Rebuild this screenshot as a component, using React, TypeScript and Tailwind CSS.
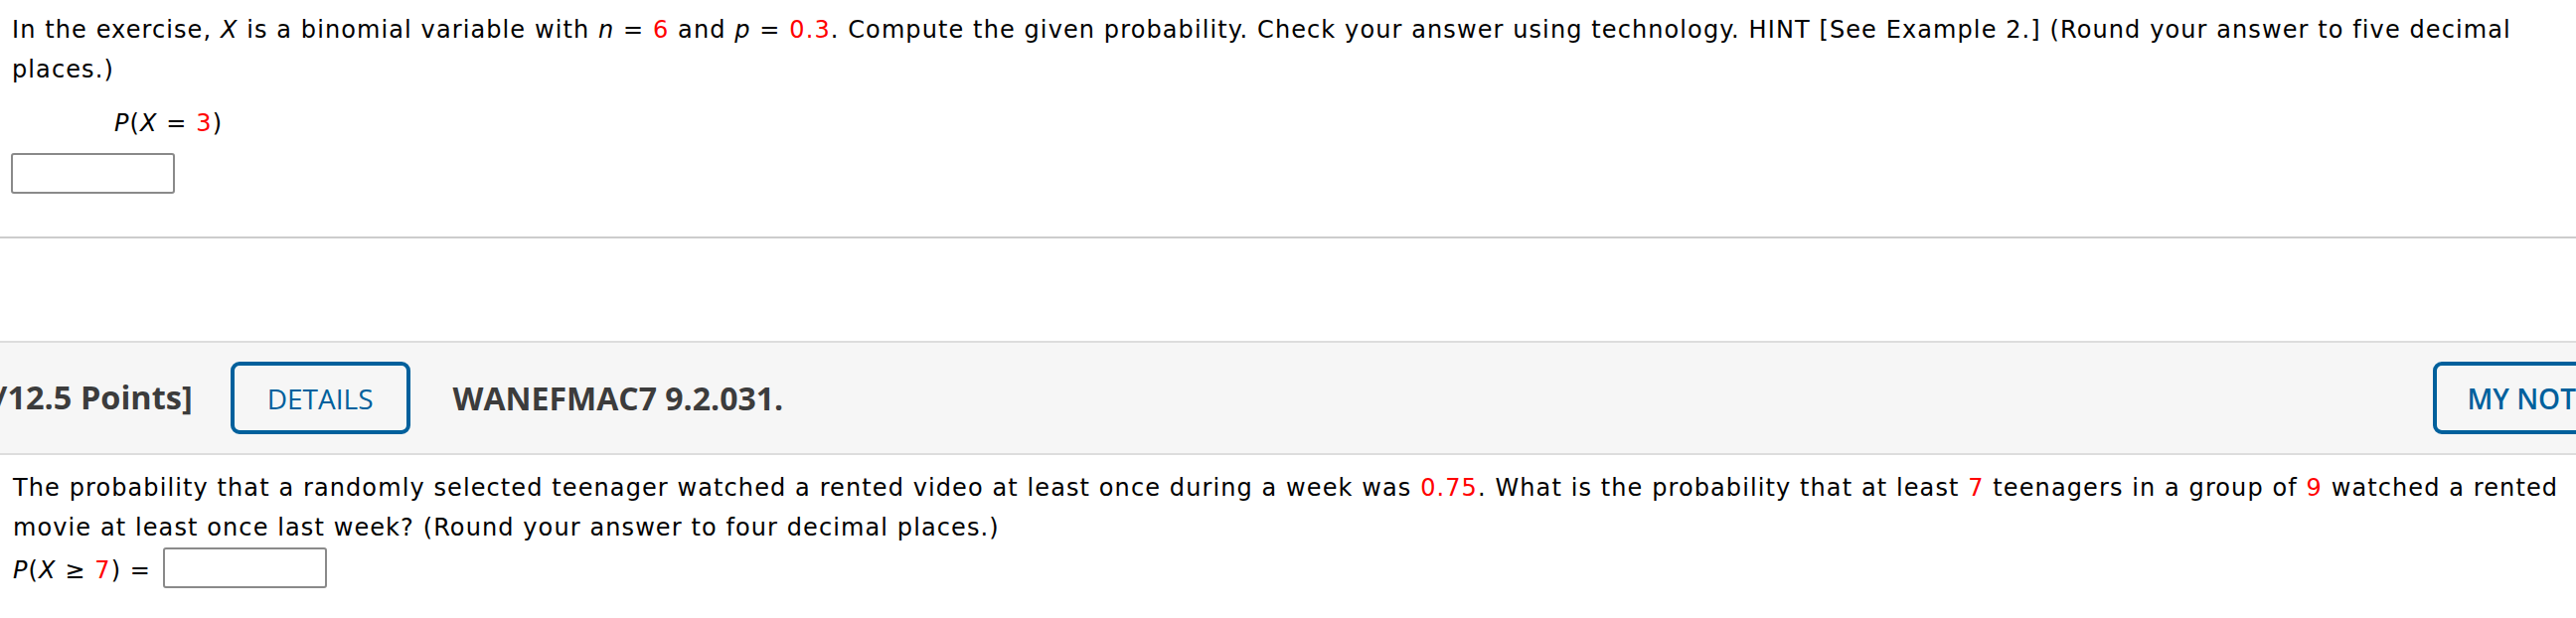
import React from 'react';

const body = "font-['DejaVu_Sans','Verdana',sans-serif] text-[24px] leading-[40px] tracking-[1.1px] text-black";
const ui = "font-['Open_Sans',sans-serif]";

const Red: React.FC<{ children: React.ReactNode }> = ({ children }) => (
  <span className="text-[#ff0000]">{children}</span>
);

const AnswerBox: React.FC = () => (
  <div className="w-[165px] h-[41px] rounded-[3px] border-2 border-[#8a8a8a] bg-white shrink-0" />
);

const App: React.FC = () => {
  return (
    <div className="w-[2592px] h-[622px] bg-white overflow-hidden">
      {/* previous question */}
      <div className={`${body} pl-[12px] pt-[10px]`}>
        <p>
          In the exercise, <i>X</i> is a binomial variable with <i>n</i> = <Red>6</Red> and <i>p</i> ={' '}
          <Red>0.3</Red>. Compute the given probability. Check your answer using technology. HINT [See Example 2.]
          (Round your answer to five decimal places.)
        </p>
        <p className="mt-[14px] pl-[103px]">
          <i>P</i>(<i>X</i> = <Red>3</Red>)
        </p>
        <div className="mt-[10px] -ml-[1px]">
          <AnswerBox />
        </div>
      </div>

      <div className="mt-[43px] h-[2px] bg-[#cccccc]" />

      {/* next question header */}
      <div className="mt-[103px] h-[115px] border-y-2 border-[#dddddd] bg-[#f6f6f6] flex items-center overflow-hidden">
        <span className={`${ui} -ml-[6px] text-[32.5px] font-bold text-[#3c3c3c] whitespace-nowrap`}>/12.5 Points]</span>
        <button className={`${ui} ml-[38px] h-[73px] px-[33px] rounded-[9px] border-4 border-[#00609c] text-[28px] text-[#00609c] whitespace-nowrap`}>
          DETAILS
        </button>
        <span className={`${ui} ml-[43px] text-[32px] font-bold text-[#3c3c3c] whitespace-nowrap`}>WANEFMAC7 9.2.031.</span>
        <div className="flex-1" />
        <button className={`${ui} -mr-[66px] h-[73px] px-[31px] rounded-[9px] border-4 border-[#00609c] text-[28px] font-semibold text-[#00609c] whitespace-nowrap shrink-0`}>
          MY NOTES
        </button>
      </div>

      {/* question */}
      <div className={`${body} pl-[13px] pt-[13px]`}>
        <p>
          The probability that a randomly selected teenager watched a rented video at least once during a week was{' '}
          <Red>0.75</Red>. What is the probability that at least <Red>7</Red> teenagers in a group of <Red>9</Red>{' '}
          watched a rented movie at least once last week? (Round your answer to four decimal places.)
        </p>
        <div className="flex items-start">
          <span className="mt-[3px] whitespace-nowrap">
            <i>P</i>(<i>X</i> ≥ <Red>7</Red>) =
          </span>
          <div className="ml-[12px]">
            <AnswerBox />
          </div>
        </div>
      </div>
    </div>
  );
};

export default App;
